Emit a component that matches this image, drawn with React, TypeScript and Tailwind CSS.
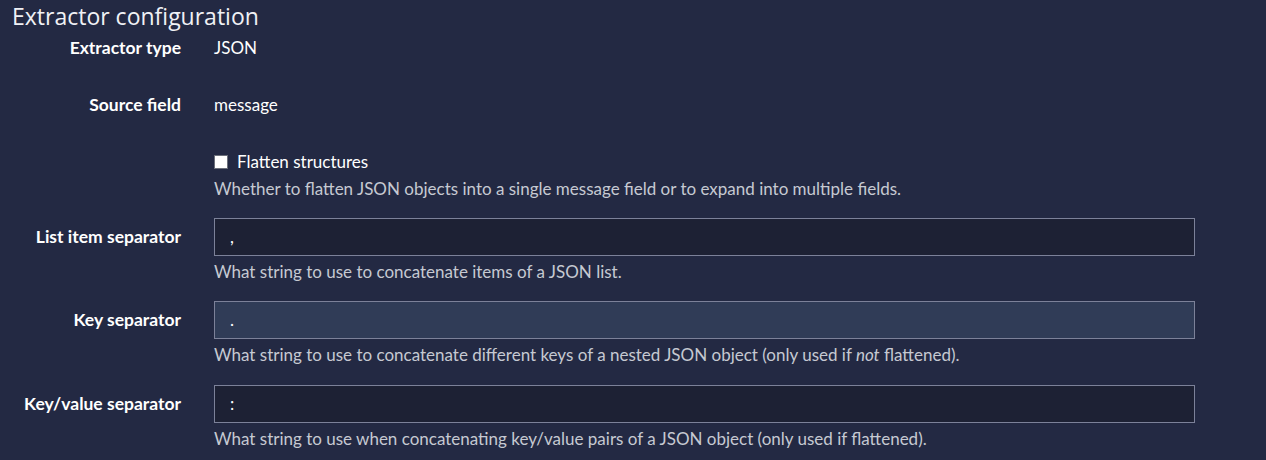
import React from "react";

const font = { fontFamily: "Lato, 'Noto Sans', sans-serif" };

function InputRow({ label, value, focused, help }: { label: string; value: string; focused?: boolean; help: React.ReactNode }) {
  return (
    <div className="flex">
      <div className="w-[181px] shrink-0 h-[38px] flex items-center justify-end font-bold text-white text-[17.5px] whitespace-nowrap">{label}</div>
      <div className="ml-[33px] w-[981px]">
        <div className={`h-[38px] border border-[#7c8199] flex items-center pl-[15px] text-white text-[17px] ${focused ? "bg-[#303c57]" : "bg-[#1d2134]"}`}>{value}</div>
        <div className="mt-[6px] h-[20px] leading-[20px] text-[17px] text-[#c6c9d2] whitespace-nowrap">{help}</div>
      </div>
    </div>
  );
}

export default function App() {
  return (
    <div className="w-[1266px] h-[460px] bg-[#232943] overflow-hidden" style={font}>
      <div className="h-[34px] pl-[12px] pt-[1px] text-[23px] leading-[30px] text-[#f0f1f5]" style={{ fontFamily: "'Open Sans', sans-serif" }}>
        Extractor configuration
      </div>
      <div className="flex h-[57px]">
        <div className="w-[181px] h-[28px] leading-[28px] text-right font-bold text-white text-[17.5px]">Extractor type</div>
        <div className="ml-[33px] h-[28px] leading-[28px] text-white text-[17px]">JSON</div>
      </div>
      <div className="flex h-[57px]">
        <div className="w-[181px] h-[28px] leading-[28px] text-right font-bold text-white text-[17.5px]">Source field</div>
        <div className="ml-[33px] h-[28px] leading-[28px] text-white text-[17px]">message</div>
      </div>
      <div className="flex">
        <div className="w-[181px] shrink-0" />
        <div className="ml-[33px]">
          <div className="h-[28px] flex items-center">
            <span className="w-[14px] h-[14px] bg-white border border-[#6b6f7a] inline-block" />
            <span className="ml-[9px] text-white text-[17px]">Flatten structures</span>
          </div>
          <div className="mt-[3px] h-[20px] leading-[20px] text-[17px] text-[#c6c9d2] whitespace-nowrap">
            Whether to flatten JSON objects into a single message field or to expand into multiple fields.
          </div>
        </div>
      </div>
      <div className="mt-[19px]">
        <InputRow label="List item separator" value="," help="What string to use to concatenate items of a JSON list." />
      </div>
      <div className="mt-[19px]">
        <InputRow
          label="Key separator"
          value="."
          focused
          help={<>What string to use to concatenate different keys of a nested JSON object (only used if <i>not</i> flattened).</>}
        />
      </div>
      <div className="mt-[20px]">
        <InputRow label="Key/value separator" value=":" help="What string to use when concatenating key/value pairs of a JSON object (only used if flattened)." />
      </div>
    </div>
  );
}
